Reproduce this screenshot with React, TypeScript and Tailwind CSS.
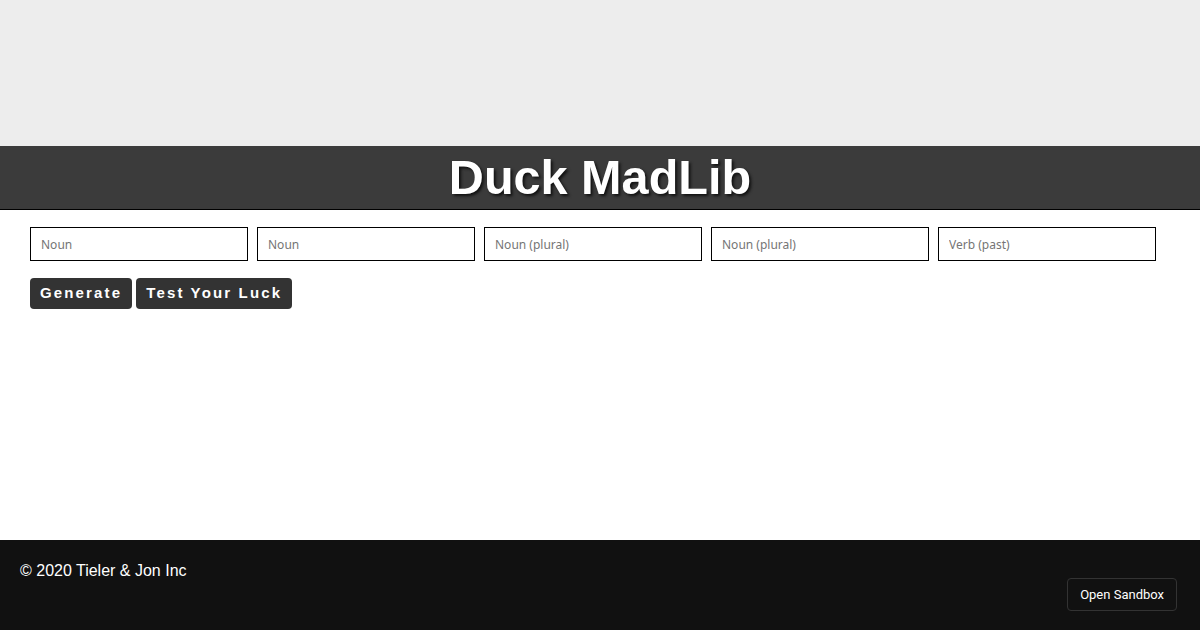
const fields = ["Noun", "Noun", "Noun (plural)", "Noun (plural)", "Verb (past)"];

export default function App() {
  return (
    <div className="flex h-[630px] w-[1200px] flex-col bg-white font-['Liberation_Sans',Arial,sans-serif]">
      {/* empty banner area */}
      <div className="h-[146px] bg-[#ededed]" />

      <header className="flex h-[64px] items-center justify-center border-b border-black bg-[#3b3b3b]">
        <h1 className="text-[48.6px] font-bold leading-none text-white [text-shadow:2px_2px_3px_#111]">
          Duck MadLib
        </h1>
      </header>

      <main className="flex-1 px-[30px] pt-[17px]">
        <div className="flex gap-[9px]">
          {fields.map((f, i) => (
            <input
              key={i}
              placeholder={f}
              className="h-[34px] w-[218px] border border-black px-[10px] font-['Noto_Sans',sans-serif] text-[12px] text-black outline-none placeholder:text-[#757575]"
            />
          ))}
        </div>
        <div className="mt-[17px] flex gap-[4px]">
          <button className="h-[31px] rounded-[4px] bg-[#333] px-[10px] text-[15px] font-bold tracking-[2.15px] text-white">
            Generate
          </button>
          <button className="h-[31px] rounded-[4px] bg-[#333] px-[10px] text-[15px] font-bold tracking-[2.15px] text-white">
            Test Your Luck
          </button>
        </div>
      </main>

      <footer className="relative h-[90px] bg-[#111] px-[20px] pt-[19px]">
        <p className="text-[16px] text-white">© 2020 Tieler &amp; Jon Inc</p>
        <button className="absolute right-[23px] bottom-[19px] h-[33px] rounded-[4px] border border-[#333] px-[12px] font-['Roboto',sans-serif] text-[13px] text-white">
          Open Sandbox
        </button>
      </footer>
    </div>
  );
}
